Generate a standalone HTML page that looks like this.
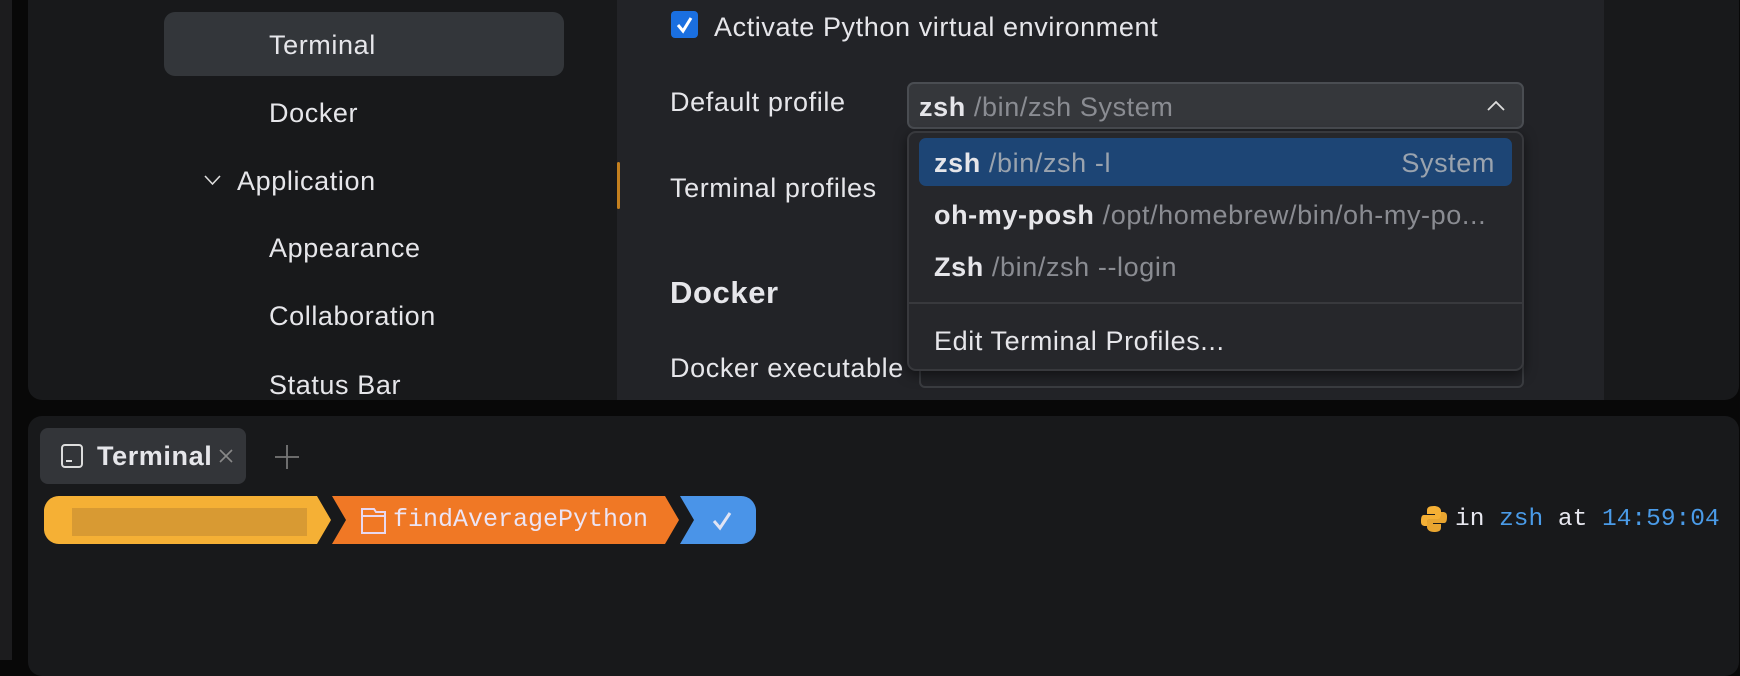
<!DOCTYPE html><html><head><style>
*{margin:0;padding:0;box-sizing:border-box}
body{width:1740px;height:660px;background:#080808;position:relative;overflow:hidden;font-family:"Liberation Sans",sans-serif;color:#e6e6ea}
.a{position:absolute}
.t{position:absolute;font-size:27px;letter-spacing:0.6px;line-height:30px;white-space:nowrap}
.m{font-family:"Liberation Mono",monospace;letter-spacing:0}
</style></head><body>
<div class="a" style="left:0;top:0;width:12px;height:660px;background:#1c1c1e"></div>
<div class="a" style="left:28px;top:0;width:1711px;height:400px;background:#18191b;border-radius:0 0 14px 14px;overflow:hidden">
 <div class="a" style="left:589px;top:0;width:987px;height:400px;background:#222327"></div>
</div>
<div class="a" style="left:164px;top:12px;width:400px;height:64px;background:#33363a;border-radius:11px"></div>
<div class="t" style="left:269px;top:30px">Terminal</div>
<div class="t" style="left:269px;top:98px">Docker</div>
<svg class="a" style="left:203px;top:173px" width="19" height="14"><path d="M2 3 L9.5 11 L17 3" stroke="#ddd" stroke-width="1.6" fill="none"/></svg>
<div class="t" style="left:237px;top:166px">Application</div>
<div class="t" style="left:269px;top:233px">Appearance</div>
<div class="t" style="left:269px;top:301px">Collaboration</div>
<div class="t" style="left:269px;top:370px">Status Bar</div>
<div class="a" style="left:617px;top:162px;width:3px;height:47px;background:#c4801f;border-radius:2px"></div>
<div class="a" style="left:671px;top:11px;width:27px;height:27px;background:#1a6fe0;border-radius:4px"></div>
<svg class="a" style="left:671px;top:11px" width="27" height="27"><path d="M7 14 L12 20 L20 7" stroke="#fff" stroke-width="3" fill="none"/></svg>
<div class="t" style="left:714px;top:12px">Activate Python virtual environment</div>
<div class="t" style="left:670px;top:87px">Default profile</div>
<div class="t" style="left:670px;top:173px">Terminal profiles</div>
<div class="t" style="left:670px;top:276px;font-size:31px;font-weight:bold;line-height:34px">Docker</div>
<div class="t" style="left:670px;top:353px">Docker executable</div>
<div class="a" style="left:919px;top:355px;width:605px;height:33px;border:2px solid #3a3c40;border-radius:6px"></div>
<div class="a" style="left:907px;top:82px;width:617px;height:47px;background:#35373b;border:2px solid #4a4d52;border-radius:7px"></div>
<div class="t" style="left:919px;top:92px"><b>zsh</b> <span style="color:#8a8c92">/bin/zsh System</span></div>
<svg class="a" style="left:1485px;top:98px" width="22" height="16"><path d="M3 12 L11 4 L19 12" stroke="#ddd" stroke-width="1.8" fill="none"/></svg>
<div class="a" style="left:907px;top:131px;width:617px;height:240px;background:#26272b;border:2px solid #38393d;border-radius:9px;box-shadow:0 4px 12px rgba(0,0,0,.5)"></div>
<div class="a" style="left:919px;top:138px;width:593px;height:48px;background:#1d4575;border-radius:7px"></div>
<div class="t" style="left:934px;top:148px"><b>zsh</b> <span style="color:#9aa3ae">/bin/zsh -l</span></div>
<div class="t" style="left:1380px;top:148px;width:115px;text-align:right;color:#9aa3ae">System</div>
<div class="t" style="left:934px;top:200px"><b>oh-my-posh</b> <span style="color:#8a8c92">/opt/homebrew/bin/oh-my-po...</span></div>
<div class="t" style="left:934px;top:252px"><b>Zsh</b> <span style="color:#8a8c92">/bin/zsh --login</span></div>
<div class="a" style="left:909px;top:302px;width:613px;height:2px;background:#38393d"></div>
<div class="t" style="left:934px;top:326px">Edit Terminal Profiles...</div>
<div class="a" style="left:28px;top:416px;width:1711px;height:260px;background:#18191b;border-radius:14px"></div>
<div class="a" style="left:40px;top:428px;width:206px;height:56px;background:#333539;border-radius:8px"></div>
<svg class="a" style="left:60px;top:444px" width="24" height="24"><rect x="2" y="1" width="20" height="22" rx="3" stroke="#ddd" stroke-width="2" fill="none"/><path d="M6 17 H12" stroke="#ddd" stroke-width="2"/></svg>
<div class="t" style="left:97px;top:441px;font-weight:bold">Terminal</div>
<svg class="a" style="left:218px;top:448px" width="16" height="16"><path d="M2 2 L14 14 M14 2 L2 14" stroke="#888" stroke-width="1.6"/></svg>
<svg class="a" style="left:274px;top:444px" width="26" height="26"><path d="M13 1 V25 M1 13 H25" stroke="#777" stroke-width="1.8"/></svg>
<svg class="a" style="left:40px;top:496px" width="720" height="48">
<path d="M19 0 H277 L291 24 L277 48 H19 A15 15 0 0 1 4 34 V14 A15 15 0 0 1 19 0Z" fill="#f5b035"/>
<rect x="32" y="12" width="235" height="28" fill="#d89a33"/>
<path d="M292 0 H625 L639 24 L625 48 H292 L306 24Z" fill="#f07825"/>
<path d="M640 0 H701 A15 15 0 0 1 716 14 V34 A15 15 0 0 1 701 48 H640 L654 24Z" fill="#4a94e8"/>
<path d="M674 25 L680 32 L690 17" stroke="#e0e4f4" stroke-width="3" fill="none"/>
<path d="M322 13 H334 L336 16 H345 V37 H322Z M322 20 H345" stroke="#e8d8f0" stroke-width="2" fill="none"/>
</svg>
<div class="t m" style="left:393px;top:505px;font-size:25px;color:#ece4f4">findAveragePython</div>
<svg class="a" style="left:1420px;top:505px" width="28" height="28"><path d="M14 1 C7 1 7 4 7 6 V9 H15 V10 H4 C1 10 1 14 1 17 C1 20 3 21 5 21 H7 V17 C7 15 9 14 11 14 H18 C20 14 21 13 21 11 V6 C21 3 18 1 14 1Z" fill="#f5b035"/><path d="M14 27 C21 27 21 24 21 22 V19 H13 V18 H24 C27 18 27 14 27 11 C27 8 25 7 23 7 H21 V11 C21 13 19 14 17 14 H10 C8 14 7 15 7 17 V22 C7 25 10 27 14 27Z" fill="#e8a530"/></svg>
<div class="t m" style="left:1455px;top:505px;font-size:24.5px;color:#e8e8f0">in <span style="color:#4a9be8">zsh</span> at <span style="color:#4a9be8">14:59:04</span></div>
</body></html>
